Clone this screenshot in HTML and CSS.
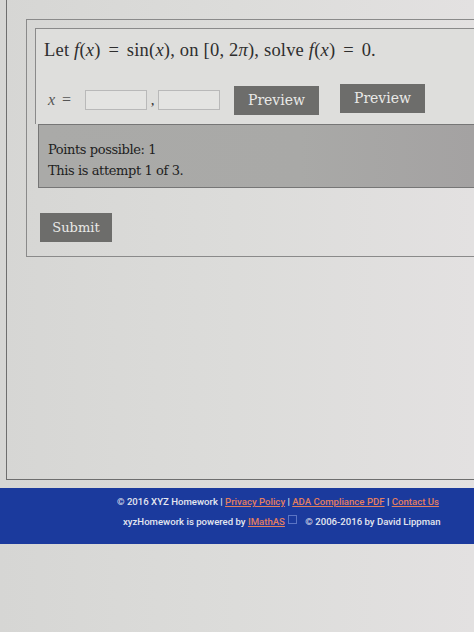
FILE: index.html
```html
<!DOCTYPE html>
<html>
<head>
<meta charset="utf-8">
<link rel="stylesheet" href="styles.css">
</head>
<body>
<div class="wrap">
  <div class="outer">
    <div class="question">
      <p class="stem">Let <i>f</i>(<i>x</i>) <span class="op">=</span> sin(<i>x</i>), on [0, 2<i>π</i>), solve <i>f</i>(<i>x</i>) <span class="op">=</span> 0.</p>
      <div class="answer-row">
        <span class="lhs"><i>x</i> <span class="op">=</span></span>
        <span class="field"></span>
        <span class="comma">,</span>
        <span class="field"></span>
        <span class="btn preview">Preview</span>
        <span class="btn preview second">Preview</span>
      </div>
    </div>
    <div class="info">
      <div>Points possible: 1</div>
      <div>This is attempt 1 of 3.</div>
    </div>
    <div class="submit-row">
      <span class="btn submit">Submit</span>
    </div>
  </div>
</div>
<footer class="footer">
  <div class="foot-line">© 2016 XYZ Homework | <a href="#">Privacy Policy</a> | <a href="#">ADA Compliance PDF</a> | <a href="#">Contact Us</a></div>
  <div class="foot-line second">xyzHomework is powered by <a href="#">IMathAS</a><span class="ext"></span> © 2006-2016 by David Lippman</div>
</footer>
</body>
</html>
```
FILE: styles.css
```css
html, body {
  margin: 0;
  padding: 0;
}
body {
  width: 474px;
  height: 632px;
  overflow: hidden;
  background: linear-gradient(90deg, #d6d6d4 0%, #dcdcda 50%, #e3e1e1 100%);
  font-family: "Liberation Serif", "DejaVu Serif", serif;
  color: #2f2f2f;
}
.wrap {
  margin-left: 6px;
  height: 460px;
  padding-top: 19px;
  border-left: 1px solid #6e6e6e;
  border-bottom: 1px solid #6e6e6e;
}
.outer {
  margin-left: 19px;
  padding: 8px 0 0 8px;
  border: 1px solid #8a8a8a;
  border-right: none;
  box-sizing: border-box;
  height: 238px;
}
.question {
  border-top: 1px solid #8a8a8a;
  border-left: 1px solid #8a8a8a;
  height: 95px;
  padding-left: 8px;
  background: #dededc;
}
.stem {
  margin: 0;
  padding-top: 10px;
  font-size: 18.5px;
  line-height: 22px;
  color: #2e2e2e;
  letter-spacing: 0.2px;
}
.op {
  padding: 0 3px;
}
.answer-row {
  display: flex;
  align-items: center;
  margin-top: 24px;
  height: 30px;
}
.lhs {
  font-size: 16px;
  color: #555;
  width: 37px;
  padding-left: 4px;
}
.field {
  width: 60px;
  height: 18px;
  border: 1px solid #b9b9b9;
  background: #e4e4e2;
}
.comma {
  width: 11px;
  text-align: center;
  font-size: 15px;
}
.btn {
  display: flex;
  align-items: center;
  justify-content: center;
  background: #6d6d6b;
  color: #e9e9e7;
  font-family: "DejaVu Serif", serif;
}
.preview {
  margin-left: 14px;
  width: 85px;
  height: 29px;
  font-size: 14px;
}
.preview.second {
  margin-left: 21px;
  margin-top: -4px;
}
.info {
  margin-left: 3px;
  border: 1px solid #767676;
  border-right: none;
  background: linear-gradient(90deg, #aaaaa8 0%, #a9a9a7 60%, #a4a2a2 100%);
  height: 64px;
  padding: 14px 0 0 9px;
  box-sizing: border-box;
  font-size: 13px;
  line-height: 21px;
  color: #1e1e1e;
  font-family: "DejaVu Serif", serif;
  letter-spacing: -0.4px;
}
.submit-row {
  padding: 25px 0 0 5px;
}
.submit {
  width: 72px;
  height: 29px;
  font-size: 13px;
}
.footer {
  margin-top: 8px;
  height: 56px;
  background: #1b3a9d;
  color: #e4e7f0;
  font-family: Roboto, "Liberation Sans", sans-serif;
  font-size: 9.6px;
  font-weight: 500;
  padding: 7px 0 0 117px;
  box-sizing: border-box;
}
.foot-line {
  line-height: 14px;
  white-space: nowrap;
}
.foot-line.second {
  margin-top: 6px;
  padding-left: 6px;
}
.footer a {
  color: #e37f5f;
  text-decoration: underline;
}
.ext {
  display: inline-block;
  width: 7px;
  height: 7px;
  margin: 0 6px 0 3px;
  border: 1px solid #5b74c4;
  vertical-align: 1px;
}
```
